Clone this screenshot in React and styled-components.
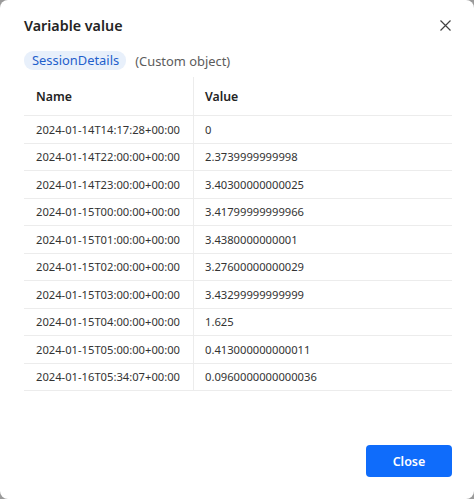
import React from 'react';
import styled, { createGlobalStyle } from 'styled-components';

const GlobalStyle = createGlobalStyle`
  html, body {
    margin: 0;
    padding: 0;
    background: #9a9a9a;
  }
  body {
    font-family: "Segoe UI", "Noto Sans", "Open Sans", sans-serif;
    color: #242424;
  }
`;

const rows = [
  ['2024-01-14T14:17:28+00:00', '0'],
  ['2024-01-14T22:00:00+00:00', '2.3739999999998'],
  ['2024-01-14T23:00:00+00:00', '3.40300000000025'],
  ['2024-01-15T00:00:00+00:00', '3.41799999999966'],
  ['2024-01-15T01:00:00+00:00', '3.4380000000001'],
  ['2024-01-15T02:00:00+00:00', '3.27600000000029'],
  ['2024-01-15T03:00:00+00:00', '3.43299999999999'],
  ['2024-01-15T04:00:00+00:00', '1.625'],
  ['2024-01-15T05:00:00+00:00', '0.413000000000011'],
  ['2024-01-16T05:34:07+00:00', '0.0960000000000036'],
];

const Dialog = styled.div`
  width: 474px;
  height: 499px;
  box-sizing: border-box;
  background: #ffffff;
  border-radius: 8px;
  padding: 12px 22px 22px 24px;
  display: flex;
  flex-direction: column;
`;

const Header = styled.div`
  display: flex;
  align-items: center;
  justify-content: space-between;
  height: 26px;
`;

const Title = styled.h1`
  margin: 0;
  font-size: 14.3px;
  font-weight: 600;
  color: #242424;
`;

const CloseIcon = styled.button`
  border: none;
  background: none;
  padding: 0;
  width: 14px;
  height: 14px;
  display: flex;
  align-items: center;
  justify-content: center;
  color: #424242;
`;

const Meta = styled.div`
  display: flex;
  align-items: center;
  gap: 9px;
  margin-top: 13px;
  font-size: 12.9px;
`;

const Chip = styled.span`
  background: #e8f0fb;
  color: #1f5fcc;
  border-radius: 9px;
  height: 19px;
  line-height: 19px;
  padding: 0 7px 0 8px;
`;

const TypeLabel = styled.span`
  color: #5c5c5c;
`;

const Table = styled.div`
  margin-top: 7px;
  width: 428px;
`;

const Row = styled.div`
  display: grid;
  grid-template-columns: 169px 1fr;
  height: ${p => (p.$head ? '39px' : '27.5px')};
  border-bottom: 1px solid #ececec;
  box-sizing: border-box;
`;

const Cell = styled.div`
  display: flex;
  align-items: center;
  padding-left: ${p => (p.$second ? '11px' : '12px')};
  border-left: ${p => (p.$second ? '1px solid #ececec' : 'none')};
  font-weight: ${p => (p.$head ? 600 : 400)};
  font-size: ${p => (p.$head ? '12.3px' : '11.2px')};
  color: ${p => (p.$head ? '#242424' : '#333333')};
  white-space: nowrap;
`;

const Footer = styled.div`
  margin-top: auto;
  display: flex;
  justify-content: flex-end;
`;

const PrimaryButton = styled.button`
  width: 86px;
  height: 32px;
  border: none;
  border-radius: 4px;
  background: #0f6cfb;
  color: #ffffff;
  font-family: inherit;
  font-size: 12.5px;
  font-weight: 600;
`;

export default function App() {
  return (
    <>
      <GlobalStyle />
      <Dialog>
        <Header>
          <Title>Variable value</Title>
          <CloseIcon aria-label="Close">
            <svg width="11" height="11" viewBox="0 0 11 11">
              <path d="M0.5 0.5 L10.5 10.5 M10.5 0.5 L0.5 10.5" stroke="#424242" strokeWidth="1.2" />
            </svg>
          </CloseIcon>
        </Header>
        <Meta>
          <Chip>SessionDetails</Chip>
          <TypeLabel>(Custom object)</TypeLabel>
        </Meta>
        <Table>
          <Row $head>
            <Cell $head>Name</Cell>
            <Cell $head $second>Value</Cell>
          </Row>
          {rows.map(([name, value]) => (
            <Row key={name}>
              <Cell>{name}</Cell>
              <Cell $second>{value}</Cell>
            </Row>
          ))}
        </Table>
        <Footer>
          <PrimaryButton>Close</PrimaryButton>
        </Footer>
      </Dialog>
    </>
  );
}
